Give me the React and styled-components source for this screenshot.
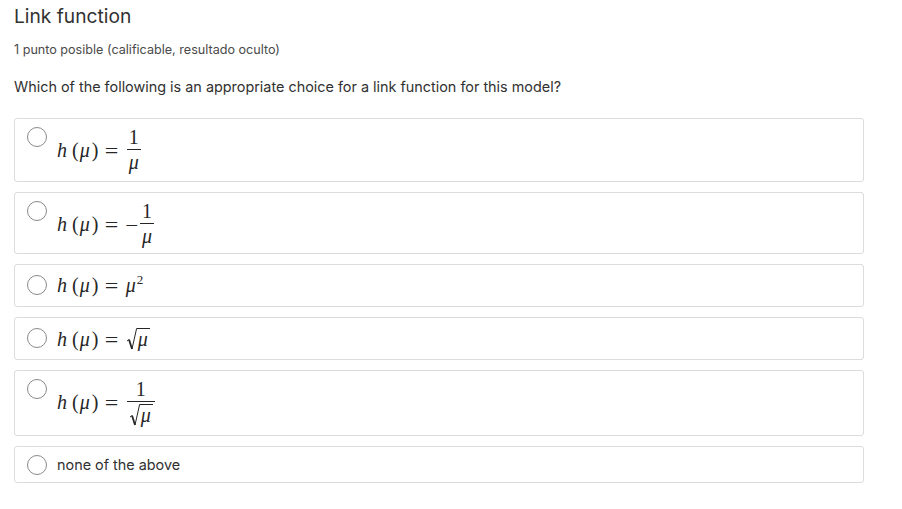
import React from "react";
import styled, { createGlobalStyle } from "styled-components";

const Global = createGlobalStyle`
  html, body { margin: 0; padding: 0; background: #fff; }
  body { font-family: Inter, "Noto Sans", "Liberation Sans", sans-serif; }
`;

const Page = styled.div`
  padding: 4px 14px 0;
  color: #313131;
`;

const Title = styled.h2`
  margin: 0;
  font-size: 19.2px;
  line-height: 24px;
  font-weight: 400;
  color: #313131;
`;

const Meta = styled.div`
  margin-top: 14px;
  font-size: 12.6px;
  line-height: 16px;
  color: #4a4a4a;
`;

const Prompt = styled.p`
  margin: 19px 0 0;
  font-size: 14.4px;
  line-height: 20px;
  color: #313131;
`;

const Options = styled.div`
  margin-top: 21px;
  width: 850px;
  display: flex;
  flex-direction: column;
  gap: 10px;
`;

const Option = styled.label`
  box-sizing: border-box;
  display: flex;
  align-items: ${(p) => (p.$center ? "center" : "flex-start")};
  gap: 10px;
  height: ${(p) => p.$h}px;
  padding: ${(p) => p.$pt}px 12px 0;
  border: 1px solid #dcdcdc;
  border-radius: 3px;
  background: #fff;
  cursor: pointer;
`;

const Radio = styled.input.attrs({ type: "radio" })`
  appearance: none;
  flex: none;
  margin: 0;
  width: 20px;
  height: 20px;
  border: 1.3px solid #8a8a8a;
  border-radius: 50%;
  background: #fff;
  box-sizing: border-box;
`;

const Text = styled.span`
  font-size: 14.4px;
  line-height: 20px;
  color: #313131;
`;

const MathRow = styled.span`
  display: inline-flex;
  align-items: center;
  font-family: "Liberation Serif", "Times New Roman", serif;
  font-size: 20px;
  line-height: 21px;
  color: #262626;
`;

const Var = styled.span`
  font-style: italic;
  margin-right: ${(p) => p.$mr || 0}px;
`;

const Paren = styled.span`
  font-size: 20px;
  margin: 0 1px;
`;

const Rel = styled.span`
  display: inline-block;
  margin: 0 8px 0 7px;
  position: relative;
  top: 1px;
  transform: scaleX(1.2);
`;

const Minus = styled.span`
  display: inline-block;
  margin: 0 2px 0 0;
  position: relative;
  top: 1px;
  transform: scaleX(1.15);
`;

const Frac = styled.span`
  display: inline-flex;
  flex-direction: column;
  align-items: stretch;
  margin: 0 1px;
`;

const Num = styled.span`
  text-align: center;
  padding: 0 2px 1px;
`;

const Den = styled.span`
  display: flex;
  justify-content: center;
  border-top: 1px solid #262626;
  padding: 2px 2px 0;
`;

const Sup = styled.span`
  font-size: 13px;
  line-height: 13px;
  align-self: flex-start;
  margin-left: 1px;
  margin-top: -2px;
`;

const SqrtWrap = styled.span`
  display: inline-flex;
  align-items: stretch;
`;

const Radicand = styled.span`
  border-top: 1px solid #262626;
  padding: 1px 2px 0 1px;
  line-height: 19px;
`;

const RadSvg = styled.svg`
  width: 11px;
  flex: none;
  align-self: stretch;
`;

function Radical() {
  return (
    <RadSvg viewBox="0 0 11 22" preserveAspectRatio="none">
      <path d="M1 13 L3 11.6" stroke="#262626" strokeWidth="1" fill="none" />
      <path d="M3 11.6 L6 21" stroke="#262626" strokeWidth="1.8" fill="none" />
      <path d="M6 21 L10.6 0.5 L11 0.5" stroke="#262626" strokeWidth="1" fill="none" />
    </RadSvg>
  );
}

function Sqrt({ children }) {
  return (
    <SqrtWrap>
      <Radical />
      <Radicand>{children}</Radicand>
    </SqrtWrap>
  );
}

function Lhs() {
  return (
    <>
      <Var $mr={4}>h</Var>
      <Paren>(</Paren>
      <Var $mr={1}>μ</Var>
      <Paren>)</Paren>
      <Rel>=</Rel>
    </>
  );
}

const mu = <Var>μ</Var>;

export default function App() {
  return (
    <>
      <Global />
      <Page>
        <Title>Link function</Title>
        <Meta>1 punto posible (calificable, resultado oculto)</Meta>
        <Prompt>
          Which of the following is an appropriate choice for a link function for this model?
        </Prompt>
        <Options>
          <Option $h={64} $pt={8}>
            <Radio name="link" />
            <MathRow>
              <Lhs />
              <Frac>
                <Num>1</Num>
                <Den>{mu}</Den>
              </Frac>
            </MathRow>
          </Option>
          <Option $h={62} $pt={8}>
            <Radio name="link" />
            <MathRow>
              <Lhs />
              <Minus>−</Minus>
              <Frac>
                <Num>1</Num>
                <Den>{mu}</Den>
              </Frac>
            </MathRow>
          </Option>
          <Option $h={43} $pt={10}>
            <Radio name="link" />
            <MathRow>
              <Lhs />
              <Var>μ</Var>
              <Sup>2</Sup>
            </MathRow>
          </Option>
          <Option $h={43} $pt={10}>
            <Radio name="link" />
            <MathRow>
              <Lhs />
              <Sqrt>{mu}</Sqrt>
            </MathRow>
          </Option>
          <Option $h={66} $pt={8}>
            <Radio name="link" />
            <MathRow>
              <Lhs />
              <Frac>
                <Num>1</Num>
                <Den>
                  <Sqrt>{mu}</Sqrt>
                </Den>
              </Frac>
            </MathRow>
          </Option>
          <Option $h={37} $pt={0} $center>
            <Radio name="link" />
            <Text>none of the above</Text>
          </Option>
        </Options>
      </Page>
    </>
  );
}
